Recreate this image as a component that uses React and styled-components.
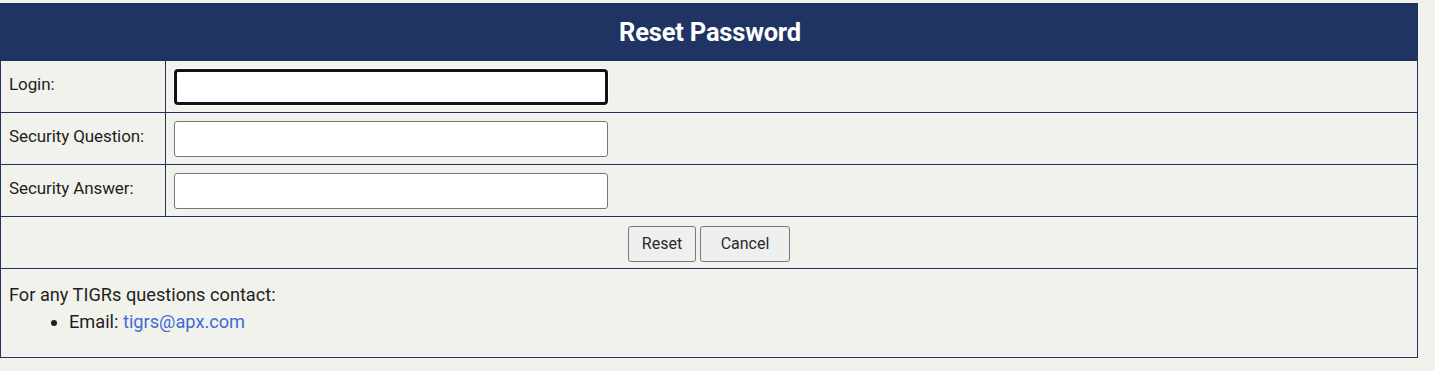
import React from 'react';
import styled, { createGlobalStyle } from 'styled-components';

const GlobalStyle = createGlobalStyle`
  html, body {
    margin: 0;
    padding: 0;
    background: #f2f2ed;
  }
  body {
    padding-top: 3px;
    font-family: Roboto, "Liberation Sans", Arial, sans-serif;
    color: #222;
  }
`;

const Panel = styled.div`
  width: 1416px;
  border: 1px solid #1f3463;
  border-top: none;
  background: #f2f2ed;
`;

const Header = styled.div`
  height: 58px;
  background: #1f3463;
  color: #fff;
  font-size: 25.5px;
  font-weight: 700;
  display: flex;
  align-items: center;
  justify-content: center;
  padding-left: 2px;
  letter-spacing: -0.2px;
`;

const Row = styled.div`
  display: grid;
  grid-template-columns: 165px 1fr;
  height: 51px;
  border-bottom: 1px solid #1f3463;
`;

const Label = styled.div`
  display: flex;
  align-items: center;
  padding: 0 0 6px 8px;
  font-size: 17px;
  letter-spacing: -0.1px;
  color: #1e1e1e;
  border-right: 1px solid #1f3463;
`;

const Field = styled.div`
  display: flex;
  align-items: center;
  padding-left: 8px;
`;

const Input = styled.input`
  box-sizing: border-box;
  width: 434px;
  height: 36px;
  background: #fff;
  border: 1px solid #767676;
  border-radius: 3px;
  font-size: 15px;
  padding: 0 6px;
  outline: none;
  ${({ $focused }) => $focused && `
    border: 3px solid #111;
    border-radius: 4px;
    box-shadow: 0 0 0 1px #fff;
  `}
`;

const ButtonRow = styled.div`
  display: flex;
  justify-content: center;
  align-items: center;
  gap: 4px;
  height: 51px;
  border-bottom: 1px solid #1f3463;
`;

const Button = styled.button`
  box-sizing: border-box;
  height: 36px;
  width: ${({ $w }) => $w}px;
  background: #efefef;
  border: 1px solid #767676;
  border-radius: 3px;
  font-family: Roboto, "Liberation Sans", Arial, sans-serif;
  font-size: 16px;
  color: #2a2a2a;
  padding: 0;
  margin-top: 2px;
`;

const Contact = styled.div`
  height: 88px;
  box-sizing: border-box;
  padding: 15px 8px 0;
  font-size: 18.2px;
  color: #1e1e1e;
`;

const List = styled.ul`
  margin: 6px 0 0;
  padding-left: 60px;
  list-style: disc;
`;

const Link = styled.a`
  color: #4169d8;
  text-decoration: none;
`;

export default function App() {
  return (
    <>
      <GlobalStyle />
      <Panel>
        <Header>Reset Password</Header>
        <Row>
          <Label>Login:</Label>
          <Field><Input $focused /></Field>
        </Row>
        <Row>
          <Label>Security Question:</Label>
          <Field><Input /></Field>
        </Row>
        <Row>
          <Label>Security Answer:</Label>
          <Field><Input /></Field>
        </Row>
        <ButtonRow>
          <Button $w={68}>Reset</Button>
          <Button $w={90}>Cancel</Button>
        </ButtonRow>
        <Contact>
          For any TIGRs questions contact:
          <List>
            <li>Email: <Link href="#">tigrs@apx.com</Link></li>
          </List>
        </Contact>
      </Panel>
    </>
  );
}
